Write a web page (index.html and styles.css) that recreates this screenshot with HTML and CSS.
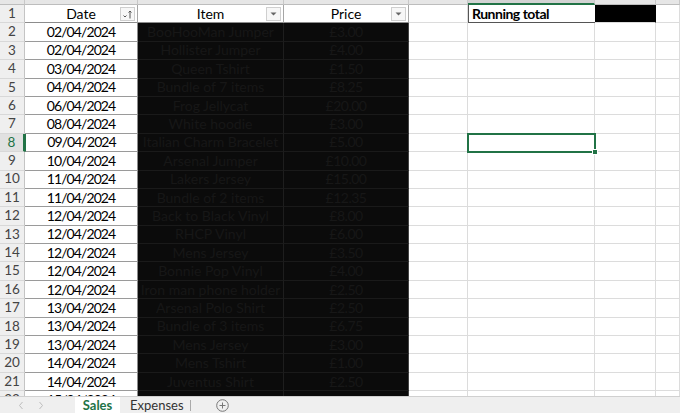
FILE: index.html
```html
<!DOCTYPE html>
<html>
<head>
<meta charset="utf-8">
<link rel="stylesheet" href="styles.css">
</head>
<body>
<div class="app">
  <div class="sheet">
    <div class="grid">
      <div class="colhdr corner"></div>
      <div class="colhdr"></div>
      <div class="colhdr"></div>
      <div class="colhdr"></div>
      <div class="colhdr"></div>
      <div class="colhdr sel"></div>
      <div class="colhdr"></div>
      <div class="colhdr"></div>

      <div class="rh">1</div>
      <div class="c th">Date<span class="fbtn sort"><svg width="11" height="11" viewBox="0 0 11 11"><path d="M1.5 6.5 L3 8 L4.5 6.5" fill="none" stroke="#555" stroke-width="1"/><path d="M8 2 V9.5 M6.5 3.5 L8 2 L9.5 3.5" fill="none" stroke="#555" stroke-width="1"/></svg></span></div>
      <div class="c th">Item<span class="fbtn"><svg width="7" height="4" viewBox="0 0 7 4"><path d="M0.5 0.5 H6.5 L3.5 3.5 Z" fill="#666"/></svg></span></div>
      <div class="c th">Price<span class="fbtn"><svg width="7" height="4" viewBox="0 0 7 4"><path d="M0.5 0.5 H6.5 L3.5 3.5 Z" fill="#666"/></svg></span></div>
      <div class="c"></div>
      <div class="c rt">Running total</div>
      <div class="c blk"></div>
      <div class="c"></div>

      <div class="rh">2</div><div class="c d">02/04/2024</div><div class="c b">BooHooMan Jumper</div><div class="c b p">£3.00</div><div class="c"></div><div class="c"></div><div class="c"></div><div class="c"></div>
      <div class="rh">3</div><div class="c d">02/04/2024</div><div class="c b">Hollister Jumper</div><div class="c b p">£4.00</div><div class="c"></div><div class="c"></div><div class="c"></div><div class="c"></div>
      <div class="rh">4</div><div class="c d">03/04/2024</div><div class="c b">Queen Tshirt</div><div class="c b p">£1.50</div><div class="c"></div><div class="c"></div><div class="c"></div><div class="c"></div>
      <div class="rh">5</div><div class="c d">04/04/2024</div><div class="c b">Bundle of 7 items</div><div class="c b p">£8.25</div><div class="c"></div><div class="c"></div><div class="c"></div><div class="c"></div>
      <div class="rh">6</div><div class="c d">06/04/2024</div><div class="c b">Frog Jellycat</div><div class="c b p">£20.00</div><div class="c"></div><div class="c"></div><div class="c"></div><div class="c"></div>
      <div class="rh">7</div><div class="c d">08/04/2024</div><div class="c b">White hoodie</div><div class="c b p">£3.00</div><div class="c"></div><div class="c"></div><div class="c"></div><div class="c"></div>
      <div class="rh selrow">8</div><div class="c d seld">09/04/2024</div><div class="c b">Italian Charm Bracelet</div><div class="c b p">£5.00</div><div class="c"></div><div class="c active"><span class="handle"></span></div><div class="c"></div><div class="c"></div>
      <div class="rh">9</div><div class="c d">10/04/2024</div><div class="c b">Arsenal Jumper</div><div class="c b p">£10.00</div><div class="c"></div><div class="c"></div><div class="c"></div><div class="c"></div>
      <div class="rh">10</div><div class="c d">11/04/2024</div><div class="c b">Lakers Jersey</div><div class="c b p">£15.00</div><div class="c"></div><div class="c"></div><div class="c"></div><div class="c"></div>
      <div class="rh">11</div><div class="c d">11/04/2024</div><div class="c b">Bundle of 2 items</div><div class="c b p">£12.35</div><div class="c"></div><div class="c"></div><div class="c"></div><div class="c"></div>
      <div class="rh">12</div><div class="c d">12/04/2024</div><div class="c b">Back to Black Vinyl</div><div class="c b p">£8.00</div><div class="c"></div><div class="c"></div><div class="c"></div><div class="c"></div>
      <div class="rh">13</div><div class="c d">12/04/2024</div><div class="c b">RHCP Vinyl</div><div class="c b p">£6.00</div><div class="c"></div><div class="c"></div><div class="c"></div><div class="c"></div>
      <div class="rh">14</div><div class="c d">12/04/2024</div><div class="c b">Mens Jersey</div><div class="c b p">£3.50</div><div class="c"></div><div class="c"></div><div class="c"></div><div class="c"></div>
      <div class="rh">15</div><div class="c d">12/04/2024</div><div class="c b">Bonnie Pop Vinyl</div><div class="c b p">£4.00</div><div class="c"></div><div class="c"></div><div class="c"></div><div class="c"></div>
      <div class="rh">16</div><div class="c d">12/04/2024</div><div class="c b">Iron man phone holder</div><div class="c b p">£2.50</div><div class="c"></div><div class="c"></div><div class="c"></div><div class="c"></div>
      <div class="rh">17</div><div class="c d">13/04/2024</div><div class="c b">Arsenal Polo Shirt</div><div class="c b p">£2.50</div><div class="c"></div><div class="c"></div><div class="c"></div><div class="c"></div>
      <div class="rh">18</div><div class="c d">13/04/2024</div><div class="c b">Bundle of 3 items</div><div class="c b p">£6.75</div><div class="c"></div><div class="c"></div><div class="c"></div><div class="c"></div>
      <div class="rh">19</div><div class="c d">13/04/2024</div><div class="c b">Mens Jersey</div><div class="c b p">£3.00</div><div class="c"></div><div class="c"></div><div class="c"></div><div class="c"></div>
      <div class="rh">20</div><div class="c d">14/04/2024</div><div class="c b">Mens Tshirt</div><div class="c b p">£1.00</div><div class="c"></div><div class="c"></div><div class="c"></div><div class="c"></div>
      <div class="rh">21</div><div class="c d">14/04/2024</div><div class="c b">Juventus Shirt</div><div class="c b p">£2.50</div><div class="c"></div><div class="c"></div><div class="c"></div><div class="c"></div>
      <div class="rh">22</div><div class="c d">15/04/2024</div><div class="c b"></div><div class="c b p"></div><div class="c"></div><div class="c"></div><div class="c"></div><div class="c"></div>
    </div>
  </div>
  <div class="tabbar">
    <div class="navs">
      <svg width="6" height="9" viewBox="0 0 6 9"><path d="M4.5 1 L1.5 4.5 L4.5 8" fill="none" stroke="#bdbdbd" stroke-width="1"/></svg>
      <svg width="6" height="9" viewBox="0 0 6 9"><path d="M1.5 1 L4.5 4.5 L1.5 8" fill="none" stroke="#bdbdbd" stroke-width="1"/></svg>
    </div>
    <span class="tab on">Sales</span>
    <span class="tab">Expenses</span>
    <span class="sep"></span>
    <span class="plus"><svg width="13" height="13" viewBox="0 0 13 13"><circle cx="6.5" cy="6.5" r="5.8" fill="none" stroke="#777" stroke-width="1"/><path d="M6.5 3.5 V9.5 M3.5 6.5 H9.5" stroke="#777" stroke-width="1"/></svg></span>
  </div>
</div>
</body>
</html>
```
FILE: styles.css
```css
* { box-sizing: border-box; }
html, body { margin: 0; padding: 0; }
body {
  width: 680px;
  height: 413px;
  overflow: hidden;
  background: #fff;
  font-family: Lato, "Liberation Sans", sans-serif;
  font-size: 14px;
  color: #000;
}
.app { display: flex; flex-direction: column; height: 413px; }
.sheet { flex: 1; overflow: hidden; position: relative; }
.grid {
  display: grid;
  grid-template-columns: 25px 113px 146px 125px 59px 127px 61px 1fr;
  grid-template-rows: 5px repeat(22, 18.4px);
}
.colhdr {
  background: #e6e6e6;
  border-right: 1px solid #c8c8c8;
  border-bottom: 1px solid #bdbdbd;
}
.colhdr.sel { background: #d3d3d3; border-bottom: 2px solid #217346; }
.rh {
  background: #efefef;
  color: #444;
  font-size: 13.5px;
  display: flex;
  align-items: center;
  justify-content: center;
  border-right: 1px solid #c4c4c4;
  border-bottom: 1px solid #d8d8d8;
  line-height: 1;
}
.rh.selrow { color: #217346; background: #e1e1e1; border-right: 2px solid #217346; }
.c {
  border-right: 1px solid #dcdcdc;
  border-bottom: 1px solid #dcdcdc;
  display: flex;
  align-items: center;
  white-space: nowrap;
  overflow: hidden;
  line-height: 1;
  position: relative;
}
.th {
  justify-content: center;
  border-right: 1px solid #a6a6a6;
  border-bottom: 1px solid #8c8c8c;
}
.fbtn {
  position: absolute;
  right: 2px;
  top: 2px;
  width: 15px;
  height: 14px;
  border: 1px solid #cfcfcf;
  background: #f7f7f7;
  display: flex;
  align-items: center;
  justify-content: center;
}
.d {
  justify-content: center;
  letter-spacing: -0.9px;
  border-right: 1px solid #8c8c8c;
  border-bottom: 1px solid #9a9a9a;
}
.seld { border-left: 1px solid #217346; }
.b {
  background: #0b0b0b;
  color: #171717;
  justify-content: center;
  border-right: 1px solid #1e1e1e;
  border-bottom: 1px solid #1a1a1a;
}
.p { border-right: 1px solid #444; letter-spacing: -0.5px; }
.rt {
  font-weight: bold;
  letter-spacing: -0.5px;
  padding-left: 3px;
  border: 1px solid #555;
  border-top: none;
  border-right: none;
}
.blk { background: #000; border-right: 1px solid #000; }
.active { outline: 2px solid #217346; outline-offset: -1px; z-index: 2; overflow: visible; }
.handle {
  position: absolute;
  right: -4px;
  bottom: -4px;
  width: 6px;
  height: 6px;
  background: #217346;
  border: 1px solid #fff;
  z-index: 3;
}
.tabbar {
  height: 17px;
  flex: none;
  background: #efefef;
  border-top: 1px solid #d0d0d0;
  display: flex;
  align-items: stretch;
  font-size: 13px;
  color: #333;
}
.navs {
  width: 75px;
  display: flex;
  align-items: center;
  gap: 14px;
  padding-left: 18px;
}
.tab { display: flex; align-items: center; line-height: 1; }
.tab.on {
  width: 45px;
  justify-content: center;
  background: #fff;
  color: #217346;
  font-weight: bold;
}
.tab + .tab { padding-left: 10px; width: 63px; }
.sep { width: 1px; height: 11px; background: #aaa; align-self: center; margin-left: 7px; }
.plus { margin-left: 25px; display: flex; align-items: center; }
```
